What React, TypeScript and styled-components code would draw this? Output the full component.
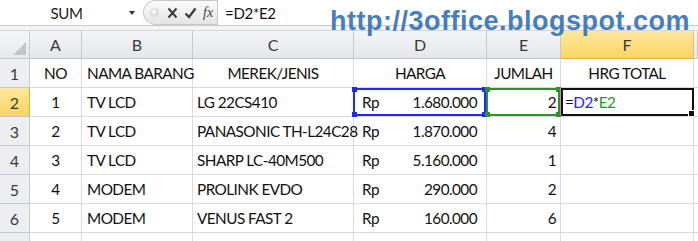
import React from 'react';
import styled, { createGlobalStyle, css } from 'styled-components';

const Global = createGlobalStyle`
  html, body { margin: 0; padding: 0; background: #fff; }
  body { width: 698px; height: 241px; overflow: hidden; font-family: Lato, "Liberation Sans", sans-serif; }
`;

const Sheet = styled.div`
  position: relative;
  width: 698px;
  height: 241px;
  overflow: hidden;
  background: #fff;
`;

const FormulaBar = styled.div`
  display: flex;
  height: 25px;
  border-bottom: 1px solid #c6c9ce;
  background: #fff;
`;

const NameBox = styled.div`
  width: 143px;
  display: flex;
  align-items: center;
  font-size: 15px;
  letter-spacing: -0.3px;
  color: #222;
`;

const NameText = styled.span`
  flex: 1;
  text-align: center;
  padding-left: 4px;
`;

const Arrow = styled.span`
  width: 0;
  height: 0;
  border-left: 3px solid transparent;
  border-right: 3px solid transparent;
  border-top: 4px solid #333;
  margin-right: 8px;
`;

const Controls = styled.div`
  width: 74px;
  display: flex;
  align-items: center;
  gap: 6px;
  padding-left: 6px;
  box-sizing: border-box;
  background: linear-gradient(#fafafa, #e4e4e4);
  border: 1px solid #c8c8c8;
  border-right: none;
  border-radius: 13px 0 0 13px;
  color: #333;
`;

const Grip = styled.span`
  width: 7px;
  height: 7px;
  border-radius: 50%;
  background: radial-gradient(circle at 40% 40%, #fff, #c9c9c9);
  border: 1px solid #d6d6d6;
  margin-right: 2px;
`;

const Fx = styled.span`
  font-family: "Liberation Serif", serif;
  font-style: italic;
  font-size: 14px;
  color: #444;
`;

const FormulaInput = styled.div`
  flex: 1;
  display: flex;
  align-items: center;
  padding-left: 7px;
  border-left: 1px solid #c8c8c8;
  font-size: 15px;
  letter-spacing: -0.3px;
  color: #111;
`;

const Band = styled.div`
  height: 4px;
  background: #f3f4f6;
`;

const Grid = styled.div`
  display: grid;
  grid-template-columns: 30px 52px 111px 161px 133px 74px 133px 4px;
  grid-auto-rows: 29px;
  font-size: 15.3px;
  letter-spacing: -0.55px;
  color: #111;
`;

const headBase = css`
  box-sizing: border-box;
  display: flex;
  align-items: center;
  justify-content: center;
  color: #3a3a3a;
  font-size: 16px;
  letter-spacing: 0;
  border-right: 1px solid #c5c8ce;
  border-bottom: 1px solid #c5c8ce;
`;

const Corner = styled.div`
  ${headBase};
  background: linear-gradient(#f4f5f7, #e6e8eb);
  border-top: 1px solid #d2d4d8;
  position: relative;
`;

const CornerTri = styled.span`
  position: absolute;
  right: 3px;
  bottom: 3px;
  width: 0;
  height: 0;
  border-left: 13px solid transparent;
  border-bottom: 13px solid #c3c5c9;
`;

const ColHead = styled.div<{ $active?: boolean }>`
  ${headBase};
  border-top: 1px solid #d2d4d8;
  background: ${(p) =>
    p.$active ? 'linear-gradient(#fde89c, #f8d462)' : 'linear-gradient(#f4f5f7, #e4e6ea)'};
  ${(p) => p.$active && 'border-bottom: 1px solid #e2b33c; border-right: 1px solid #e2c16a;'}
`;

const RowHead = styled.div<{ $active?: boolean }>`
  ${headBase};
  background: ${(p) => (p.$active ? 'linear-gradient(#fde89c, #f8d462)' : '#eceef1')};
  ${(p) => p.$active && 'border-right: 1px solid #e2b33c;'}
`;

const Cell = styled.div<{ $align?: 'left' | 'center' | 'right'; $pad?: number }>`
  box-sizing: border-box;
  position: relative;
  display: flex;
  align-items: center;
  justify-content: ${(p) =>
    p.$align === 'center' ? 'center' : p.$align === 'right' ? 'flex-end' : 'flex-start'};
  padding: 0 ${(p) => p.$pad ?? 4}px;
  border-right: 1px solid #dadada;
  border-bottom: 1px solid #dadada;
  white-space: nowrap;
`;

const Money = styled(Cell)`
  justify-content: space-between;
  padding: 0 9px 0 8px;
`;

const RefBox = styled.span<{ $c: string }>`
  position: absolute;
  left: -1px;
  top: 0;
  right: 0;
  bottom: 0;
  border: 2px solid ${(p) => p.$c};
  pointer-events: none;
`;

const Handle = styled.span<{ $c: string; $pos: 'tl' | 'tr' | 'bl' | 'br' }>`
  position: absolute;
  width: 5px;
  height: 5px;
  background: ${(p) => p.$c};
  ${(p) => (p.$pos[0] === 't' ? 'top: -3px;' : 'bottom: -3px;')}
  ${(p) => (p.$pos[1] === 'l' ? 'left: -3px;' : 'right: -3px;')}
`;

const ActiveBox = styled.span`
  position: absolute;
  left: 0;
  top: 0;
  right: -1px;
  bottom: 0;
  border: 2px solid #111;
  pointer-events: none;
`;

const Cursor = styled.span`
  position: absolute;
  left: -1px;
  top: 0;
  bottom: 0;
  width: 1px;
  background: #ff66cc;
`;

const FillHandle = styled.span`
  position: absolute;
  right: -3px;
  bottom: -3px;
  width: 5px;
  height: 5px;
  background: #111;
  border: 1px solid #fff;
`;

const Tok = styled.span<{ $c?: string }>`
  color: ${(p) => p.$c ?? '#111'};
`;

const Watermark = styled.div`
  position: absolute;
  left: 330px;
  top: 6px;
  font-family: "Liberation Sans", Arial, sans-serif;
  font-weight: 700;
  font-size: 27px;
  letter-spacing: 0.5px;
  color: rgba(52, 114, 182, 0.92);
  white-space: nowrap;
  pointer-events: none;
`;

const BLUE = '#2424ff';
const GREEN = '#2c922c';

const rows = [
  { no: 1, nama: 'TV LCD', merek: 'LG 22CS410', harga: '1.680.000', jml: 2 },
  { no: 2, nama: 'TV LCD', merek: 'PANASONIC TH-L24C28', harga: '1.870.000', jml: 4 },
  { no: 3, nama: 'TV LCD', merek: 'SHARP LC-40M500', harga: '5.160.000', jml: 1 },
  { no: 4, nama: 'MODEM', merek: 'PROLINK EVDO', harga: '290.000', jml: 2 },
  { no: 5, nama: 'MODEM', merek: 'VENUS FAST 2', harga: '160.000', jml: 6 },
];

const corners: Array<'tl' | 'tr' | 'bl' | 'br'> = ['tl', 'tr', 'bl', 'br'];

export default function App() {
  return (
    <Sheet>
      <Global />
      <FormulaBar>
        <NameBox>
          <NameText>SUM</NameText>
          <Arrow />
        </NameBox>
        <Controls>
          <Grip />
          <svg width="11" height="12" viewBox="0 0 11 12">
            <path d="M1.5 1.5 L9.5 10.5 M9.5 1.5 L1.5 10.5" stroke="#3a3a3a" strokeWidth="2" fill="none" />
          </svg>
          <svg width="13" height="12" viewBox="0 0 13 12">
            <path d="M1.5 6.5 L5 10 L11.5 1.5" stroke="#3a3a3a" strokeWidth="2.2" fill="none" />
          </svg>
          <Fx>fx</Fx>
        </Controls>
        <FormulaInput>=D2*E2</FormulaInput>
      </FormulaBar>
      <Band />
      <Grid>
        <Corner>
          <CornerTri />
        </Corner>
        {['A', 'B', 'C', 'D', 'E', 'F'].map((c) => (
          <ColHead key={c} $active={c === 'F'}>
            {c}
          </ColHead>
        ))}
        <ColHead />

        <RowHead>1</RowHead>
        <Cell $align="center">NO</Cell>
        <Cell $pad={5}>NAMA BARANG</Cell>
        <Cell $align="center">MEREK/JENIS</Cell>
        <Cell $align="center">HARGA</Cell>
        <Cell $align="center">JUMLAH</Cell>
        <Cell $align="center">HRG TOTAL</Cell>
        <Cell />

        {rows.map((r, i) => {
          const first = i === 0;
          return (
            <React.Fragment key={r.no}>
              <RowHead $active={first}>{i + 2}</RowHead>
              <Cell $align="center">{r.no}</Cell>
              <Cell $pad={5}>{r.nama}</Cell>
              <Cell>{r.merek}</Cell>
              <Money>
                <span>Rp</span>
                <span>{r.harga}</span>
                {first && (
                  <RefBox $c={BLUE}>
                    {corners.map((p) => (
                      <Handle key={p} $c={BLUE} $pos={p} />
                    ))}
                  </RefBox>
                )}
              </Money>
              <Cell $align="right" $pad={4}>
                {r.jml}
                {first && (
                  <RefBox $c={GREEN}>
                    {corners.map((p) => (
                      <Handle key={p} $c={GREEN} $pos={p} />
                    ))}
                  </RefBox>
                )}
              </Cell>
              <Cell $pad={4}>
                {first && (
                  <>
                    <Tok>=</Tok>
                    <Tok $c={BLUE}>D2</Tok>
                    <Tok>*</Tok>
                    <Tok $c={GREEN}>E2</Tok>
                    <ActiveBox>
                      <FillHandle />
                    </ActiveBox>
                    <Cursor />
                  </>
                )}
              </Cell>
              <Cell />
            </React.Fragment>
          );
        })}
        <RowHead />
        <Cell />
        <Cell />
        <Cell />
        <Cell />
        <Cell />
        <Cell />
        <Cell />
      </Grid>
      <Watermark>http://3office.blogspot.com</Watermark>
    </Sheet>
  );
}
